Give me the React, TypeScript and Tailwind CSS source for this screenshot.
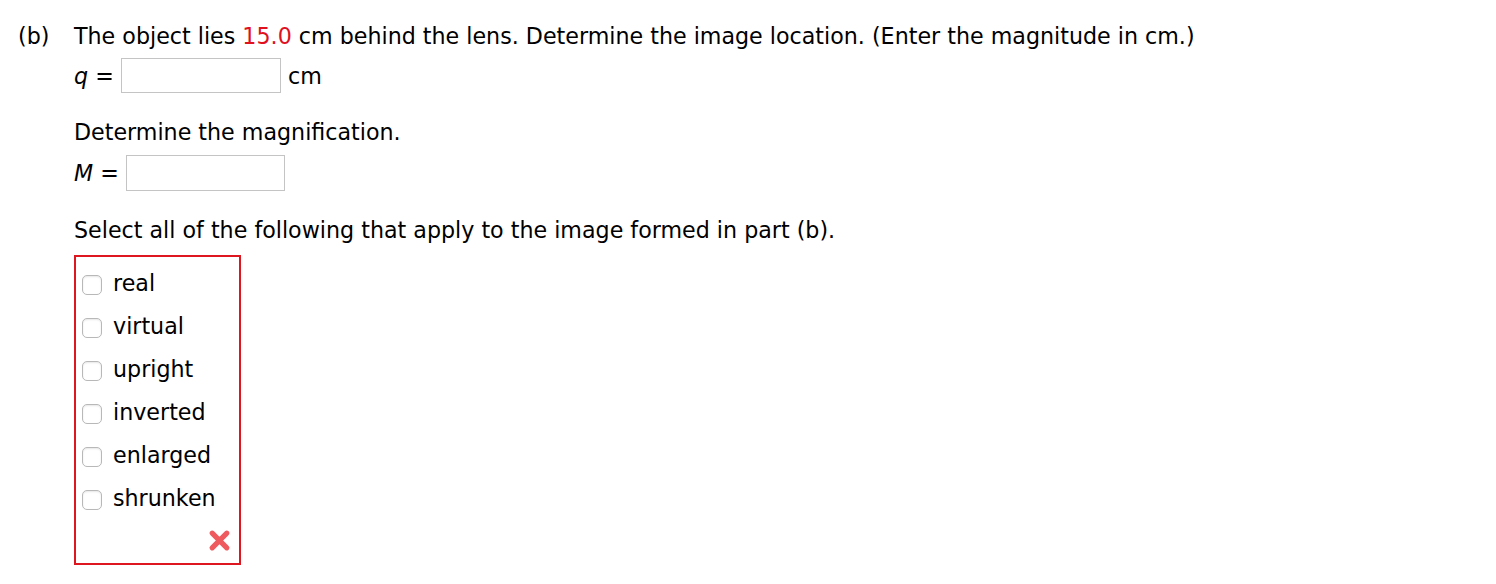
import React from 'react'

const options = ['real', 'virtual', 'upright', 'inverted', 'enlarged', 'shrunken']

function Checkbox() {
  return (
    <span className="inline-block shrink-0 w-[20px] h-[20px] rounded-[5px] border border-[#b8b8b8] bg-white shadow-[inset_0_1px_2px_rgba(0,0,0,0.1)]" />
  )
}

function RedX() {
  return (
    <svg width="23" height="23" viewBox="0 0 22 22">
      <path d="M4 4 L18 18 M18 4 L4 18" stroke="#ef5a5f" strokeWidth="5" strokeLinecap="round" />
    </svg>
  )
}

export default function App() {
  return (
    <div className="w-[1496px] h-[584px] bg-white text-black text-[22.2px] leading-[24px] font-['DejaVu_Sans',Verdana,sans-serif] pt-[24px]">
      <div className="flex">
        <div className="w-[74px] pl-[18px]">(b)</div>
        <div className="flex-1">
          <p>
            The object lies <span className="text-[#e0101e]">15.0</span> cm behind the lens. Determine the image location. (Enter the magnitude in cm.)
          </p>

          <div className="flex items-center mt-[10px]">
            <span className="italic w-[47px] whitespace-nowrap">
              q <span className="not-italic">=</span>
            </span>
            <span className="w-[160px] h-[35px] border border-[#c4c4c4] bg-white" />
            <span className="ml-[7px]">cm</span>
          </div>

          <p className="mt-[27px]">Determine the magnification.</p>

          <div className="flex items-center mt-[11px]">
            <span className="w-[52px] whitespace-nowrap">
              <span className="italic">M</span> =
            </span>
            <span className="w-[159px] h-[36px] border border-[#c4c4c4] bg-white" />
          </div>

          <p className="mt-[27px]">Select all of the following that apply to the image formed in part (b).</p>

          <div className="mt-[13px] w-[167px] h-[310px] border-2 border-[#dd1620] pl-[6px] pt-[6px] flex flex-col">
            {options.map((o) => (
              <div key={o} className="flex items-center h-[43px] gap-[11px]">
                <Checkbox />
                <span className="-mt-[4px]">{o}</span>
              </div>
            ))}
            <div className="flex justify-end pr-[8px] mt-[8px]">
              <RedX />
            </div>
          </div>
        </div>
      </div>
    </div>
  )
}
